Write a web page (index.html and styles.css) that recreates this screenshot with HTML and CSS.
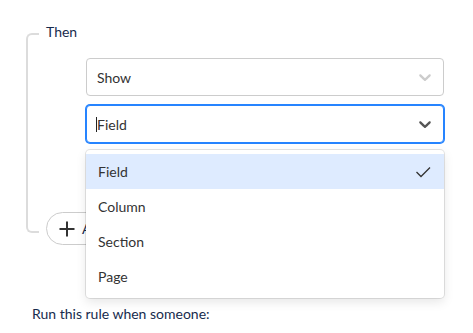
FILE: index.html
```html
<!DOCTYPE html>
<html>
<head>
<meta charset="utf-8">
<link rel="stylesheet" href="styles.css">
</head>
<body>
<div class="page">
  <section class="rule">
    <div class="bracket"></div>
    <div class="rule-body">
      <div class="rule-label">Then</div>
      <div class="selects">
        <div class="select">
          <div class="select-value">Show</div>
          <div class="select-indicator">
            <svg viewBox="0 0 20 20" width="20" height="20"><path d="M4.516 7.548c0.436-0.446 1.043-0.481 1.576 0l3.908 3.747 3.908-3.747c0.533-0.481 1.141-0.446 1.574 0 0.436 0.445 0.408 1.197 0 1.615-0.406 0.418-4.695 4.502-4.695 4.502-0.217 0.223-0.502 0.335-0.787 0.335s-0.57-0.112-0.789-0.335c0 0-4.287-4.084-4.695-4.502s-0.436-1.17 0-1.615z"/></svg>
          </div>
        </div>
        <div class="select is-focused">
          <div class="select-value"><span class="caret"></span>Field</div>
          <div class="select-indicator">
            <svg viewBox="0 0 20 20" width="20" height="20"><path d="M4.516 7.548c0.436-0.446 1.043-0.481 1.576 0l3.908 3.747 3.908-3.747c0.533-0.481 1.141-0.446 1.574 0 0.436 0.445 0.408 1.197 0 1.615-0.406 0.418-4.695 4.502-4.695 4.502-0.217 0.223-0.502 0.335-0.787 0.335s-0.57-0.112-0.789-0.335c0 0-4.287-4.084-4.695-4.502s-0.436-1.17 0-1.615z"/></svg>
          </div>
          <ul class="menu">
            <li class="option is-selected">Field
              <svg class="check" viewBox="0 0 16 14" width="16" height="14"><polyline points="1.5,7 6,11.5 15,2.5" fill="none" stroke="#333" stroke-width="1.3"/></svg>
            </li>
            <li class="option">Column</li>
            <li class="option">Section</li>
            <li class="option">Page</li>
          </ul>
        </div>
      </div>
      <button class="add-btn">
        <svg viewBox="0 0 18 18" width="18" height="18"><path d="M9 1.5v15M1.5 9h15" stroke="#333" stroke-width="2" fill="none"/></svg>
        <span>Add action</span>
      </button>
    </div>
  </section>
  <p class="trigger">Run this rule when someone:</p>
</div>
</body>
</html>
```

FILE: styles.css
```css
* { box-sizing: border-box; }
html, body { margin: 0; background: #fff; }
body {
  font-family: Lato, "Open Sans", sans-serif;
  font-size: 14px;
  color: #333;
}
.page {
  padding-top: 24px;
}
.rule {
  display: flex;
  margin-left: 26px;
}
.bracket {
  width: 13px;
  flex: none;
  margin: 9px 7px 12px 0;
  border: 2px solid #dcdcdc;
  border-right: none;
  border-radius: 6px 0 0 6px;
}
.rule-body {
  display: flex;
  flex-direction: column;
  align-items: flex-start;
}
.rule-label {
  line-height: 16px;
  color: #172b4d;
}
.selects {
  margin: 18px 0 0 40px;
  width: 358px;
  display: flex;
  flex-direction: column;
  gap: 9px;
}
.select {
  position: relative;
  height: 38px;
  border: 1px solid #ccc;
  border-radius: 4px;
  display: flex;
  align-items: center;
  background: #fff;
}
.select.is-focused {
  border-color: #2684ff;
  box-shadow: 0 0 0 1px #2684ff;
}
.select-value {
  flex: 1;
  padding: 0 10px;
  line-height: 19px;
  color: #333;
  display: flex;
  align-items: center;
}
.caret {
  display: inline-block;
  width: 1px;
  height: 15px;
  background: #222;
  margin-left: -1px;
}
.select-indicator {
  padding: 8px;
  display: flex;
}
.select-indicator svg { fill: #ccc; }
.is-focused .select-indicator svg { fill: #555; }
.menu {
  position: absolute;
  z-index: 2;
  top: 100%;
  left: -1px;
  right: -1px;
  margin: 8px 0 0;
  padding: 4px 0;
  list-style: none;
  background: #fff;
  border-radius: 4px;
  box-shadow: 0 0 0 1px rgba(0,0,0,0.1), 0 4px 11px rgba(0,0,0,0.1);
}
.option {
  padding: 8px 12px;
  line-height: 19px;
  color: #333;
  display: flex;
  align-items: center;
  justify-content: space-between;
}
.option.is-selected {
  background: #deebff;
}
.check { margin-right: 1px; }
.add-btn {
  margin-top: 69px;
  height: 33px;
  display: flex;
  align-items: center;
  gap: 6px;
  padding: 0 14px 0 11px;
  border: 1px solid #ccc;
  border-radius: 17px;
  background: #fff;
  font: inherit;
  color: #172b4d;
}
.trigger {
  margin: 61px 0 0 32px;
  line-height: 16px;
  color: #172b4d;
}
```
